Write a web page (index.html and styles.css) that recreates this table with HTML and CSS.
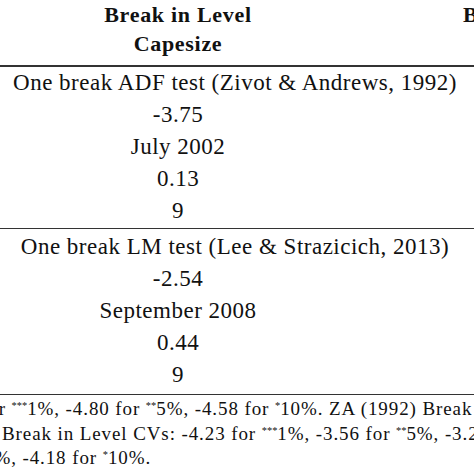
FILE: index.html
```html
<!DOCTYPE html>
<html lang="en">
<head>
    <meta charset="UTF-8">
    <meta name="viewport" content="width=device-width, initial-scale=1.0">
    <title>Unit root tests with structural breaks</title>
    <link rel="stylesheet" href="styles.css">
</head>
<body>
    <div class="table">
        <div class="head">
            <div class="head-main">Break in Level<br>Capesize</div>
            <div class="head-next">Break in Level and Trend</div>
        </div>
        <div class="section first">
            <div class="span-row">One break ADF test (Zivot &amp; Andrews, 1992)</div>
            <div class="cell">-3.75</div>
            <div class="cell">July 2002</div>
            <div class="cell">0.13</div>
            <div class="cell">9</div>
        </div>
        <div class="section second">
            <div class="span-row">One break LM test (Lee &amp; Strazicich, 2013)</div>
            <div class="cell">-2.54</div>
            <div class="cell">September 2008</div>
            <div class="cell">0.44</div>
            <div class="cell">9</div>
        </div>
        <div class="notes">
            <div class="note l1">for <sup>***</sup>1%, -4.80 for <sup>**</sup>5%, -4.58 for <sup>*</sup>10%. ZA (1992) Break in Trend CVs</div>
            <div class="note l2">Break in Level CVs: -4.23 for <sup>***</sup>1%, -3.56 for <sup>**</sup>5%, -3.21 for <sup>*</sup>10%.</div>
            <div class="note l3">5%, -4.18 for <sup>*</sup>10%.</div>
        </div>
    </div>
</body>
</html>
```

FILE: styles.css
```css
body {
    margin: 0;
    background-color: #fff;
    color: #111;
    font-family: "Liberation Serif", "Times New Roman", serif;
    overflow: hidden;
}
.table {
    width: 474px;
    overflow: hidden;
}
.head {
    display: grid;
    grid-template-columns: 356px 1fr;
    height: 65px;
    border-bottom: 2px solid #333;
    font-weight: bold;
    font-size: 22px;
    letter-spacing: 0.7px;
    line-height: 29px;
    white-space: nowrap;
}
.head-main {
    text-align: center;
}
.head-next {
    padding-left: 107px;
}
.section {
    font-size: 23px;
    letter-spacing: 0.5px;
    line-height: 32px;
    border-bottom: 1px solid #333;
}
.section.first {
    padding-bottom: 1px;
}
.section.second {
    padding-top: 2px;
    padding-bottom: 3px;
}
.span-row {
    text-align: center;
    padding-right: 4px;
    white-space: nowrap;
}
.cell {
    width: 356px;
    text-align: center;
}
.notes {
    font-size: 19px;
    letter-spacing: 0.9px;
    line-height: 24.5px;
    padding-top: 2px;
}
.note {
    white-space: nowrap;
}
.note sup {
    font-size: 0.55em;
    line-height: 0;
    vertical-align: 0.6em;
    letter-spacing: 0;
}
.note.l1 {
    margin-left: -19px;
}
.note.l2 {
    margin-left: 2px;
}
.note.l3 {
    margin-left: -16px;
}
```
